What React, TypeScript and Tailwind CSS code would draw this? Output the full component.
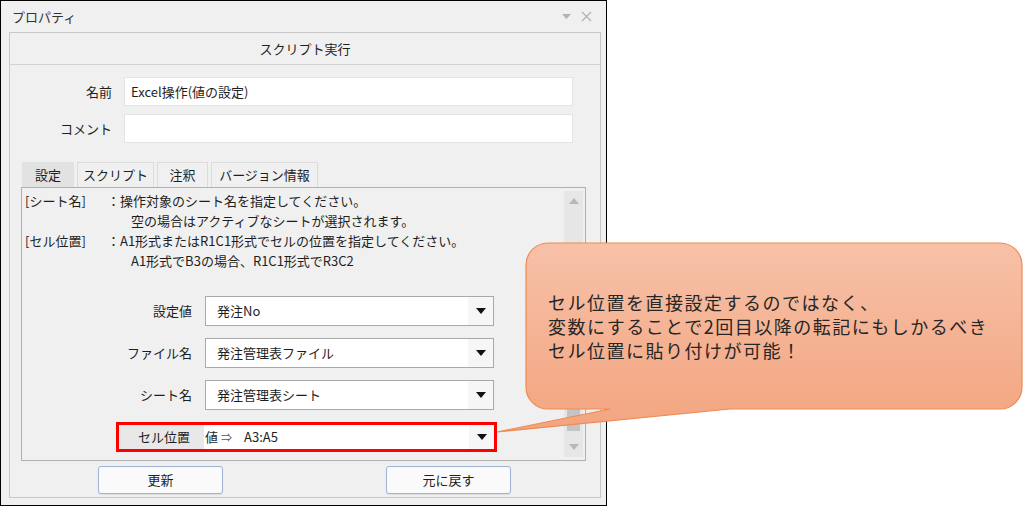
import React from "react";

const FONT = "font-['Noto_Sans_CJK_JP','Noto_Sans',sans-serif]";

const TABS = ["設定", "スクリプト", "注釈", "バージョン情報"];
const TAB_WIDTHS = ["w-[52px]", "w-[77px]", "w-[51px]", "w-[107px]"];

const FIELDS = [
  { label: "設定値", value: "発注No" },
  { label: "ファイル名", value: "発注管理表ファイル" },
  { label: "シート名", value: "発注管理表シート" },
];

function Caret() {
  return (
    <svg width="10" height="6" viewBox="0 0 10 6">
      <polygon points="0,0 10,0 5,6" fill="#111" />
    </svg>
  );
}

function Select({ value }: { value: string }) {
  return (
    <div className="flex h-[30px] w-[289px] border border-[#a9a9a9] bg-white">
      <div className="flex flex-1 items-center pl-[11px]">{value}</div>
      <div className="flex w-[25px] items-center justify-center bg-[#f6f6f6]">
        <Caret />
      </div>
    </div>
  );
}

function Button({ label }: { label: string }) {
  return (
    <div className="flex h-[28px] w-[125px] items-center justify-center rounded-[3px] border border-[#9fb4d2] bg-[#fafafa] shadow-[0_1px_1px_rgba(0,0,0,0.08)]">
      {label}
    </div>
  );
}

function Scrollbar() {
  return (
    <div className="my-[3px] mr-[2px] flex w-[19px] flex-col bg-[#e6e6e6]">
      <div className="flex h-[20px] items-center justify-center">
        <svg width="10" height="6" viewBox="0 0 10 6">
          <polygon points="0,6 10,6 5,0" fill="#b8b8b8" />
        </svg>
      </div>
      <div className="flex-1" />
      <div className="mx-[3px] h-[22px] bg-[#c4c4c4]" />
      <div className="h-[6px]" />
      <div className="flex h-[20px] items-center justify-center">
        <svg width="10" height="6" viewBox="0 0 10 6">
          <polygon points="0,0 10,0 5,6" fill="#b8b8b8" />
        </svg>
      </div>
    </div>
  );
}

function Callout() {
  return (
    <>
      <svg
        className="absolute left-[497px] top-[242px]"
        width="528"
        height="192"
        viewBox="0 0 528 192"
      >
        <defs>
          <linearGradient id="bubble" x1="0" y1="0" x2="0" y2="1">
            <stop offset="0" stopColor="#f7c1a8" />
            <stop offset="1" stopColor="#f3a47f" />
          </linearGradient>
        </defs>
        <path
          d="M51,1 H503 A22,22 0 0 1 525,23 V145 A22,22 0 0 1 503,167 H233 L0,190 L113,167 H51 A22,22 0 0 1 29,145 V23 A22,22 0 0 1 51,1 Z"
          fill="url(#bubble)"
          stroke="#ee8b52"
          strokeWidth="1.2"
        />
      </svg>
      <div className="absolute left-[548px] top-[290px] text-[18px] leading-[24px] tracking-[1.5px] text-[#262626]">
        <div>セル位置を直接設定するのではなく、</div>
        <div>変数にすることで2回目以降の転記にもしかるべき</div>
        <div>セル位置に貼り付けが可能！</div>
      </div>
    </>
  );
}

export default function App() {
  return (
    <div className={`relative h-[510px] w-[1024px] bg-white text-[13px] text-[#1e1e1e] ${FONT}`}>
      <div className="flex h-[506px] w-[607px] flex-col border border-black bg-[#f0f0f0]">
        {/* title bar */}
        <div className="flex h-[31px] items-center justify-between pl-[11px] pr-[14px]">
          <span className="text-[#333]">プロパティ</span>
          <div className="flex items-center gap-[10px]">
            <svg width="9" height="5" viewBox="0 0 9 5">
              <polygon points="0,0 9,0 4.5,5" fill="#b3b3b3" />
            </svg>
            <svg width="11" height="11" viewBox="0 0 11 11">
              <path d="M1 1 L10 10 M10 1 L1 10" stroke="#b3b3b3" strokeWidth="1.3" />
            </svg>
          </div>
        </div>

        <div className="ml-[8px] flex h-[466px] w-[592px] flex-col border border-[#c8c8c8]">
          <div className="flex h-[32px] items-center justify-center border-b border-[#d2d2d2]">
            スクリプト実行
          </div>

          <div className="mt-[12px] flex flex-col gap-[8px]">
            <div className="flex items-center">
              <div className="w-[102px] text-right">名前</div>
              <div className="ml-[12px] flex h-[29px] w-[449px] items-center border border-[#e4e4e4] bg-white pl-[6px]">
                Excel操作(値の設定)
              </div>
            </div>
            <div className="flex items-center">
              <div className="w-[102px] text-right">コメント</div>
              <div className="ml-[12px] h-[29px] w-[449px] border border-[#e4e4e4] bg-white" />
            </div>
          </div>

          {/* tabs */}
          <div className="ml-[12px] mt-[19px] flex gap-[3px]">
            {TABS.map((t, i) => (
              <div
                key={t}
                className={`flex h-[25px] items-center justify-center border border-b-0 ${TAB_WIDTHS[i]} ${
                  i === 0 ? "border-[#e2e2e2] bg-[#e2e2e2]" : "border-[#dcdcdc] bg-[#f0f0f0]"
                }`}
              >
                {t}
              </div>
            ))}
          </div>

          {/* tab content */}
          <div className="ml-[11px] flex h-[274px] w-[565px] border border-[#b0b0b0]">
            <div className="flex flex-1 flex-col pl-[3px] pt-[3px]">
              <div className="leading-[20px]">
                <div className="flex">
                  <span className="w-[82px]">[シート名]</span>
                  <span>：操作対象のシート名を指定してください。</span>
                </div>
                <div className="pl-[106px]">空の場合はアクティブなシートが選択されます。</div>
                <div className="flex">
                  <span className="w-[82px]">[セル位置]</span>
                  <span>：A1形式またはR1C1形式でセルの位置を指定してください。</span>
                </div>
                <div className="pl-[106px]">A1形式でB3の場合、R1C1形式でR3C2</div>
              </div>

              <div className="mt-[25px] flex flex-col gap-[12px] -ml-[3px]">
                {FIELDS.map((f) => (
                  <div key={f.label} className="flex items-center">
                    <div className="w-[170px] text-right">{f.label}</div>
                    <div className="ml-[13px]">
                      <Select value={f.value} />
                    </div>
                  </div>
                ))}
                <div className="flex">
                  <div className="w-[94px]" />
                  <div className="flex h-[30px] w-[381px] border-[3px] border-[#ff0000]">
                    <div className="flex w-[85px] items-center justify-end bg-[#e8e8e8] pr-[14px]">
                      セル位置
                    </div>
                    <div className="flex flex-1 items-center bg-white">
                      <span className="pl-[1px]">値</span>
                      <span className="ml-[3px] text-[11px] text-[#555]">⇒</span>
                      <span className="ml-[12px]">A3:A5</span>
                      <div className="flex-1" />
                      <div className="flex h-full w-[25px] items-center justify-center bg-[#f6f6f6]">
                        <Caret />
                      </div>
                    </div>
                  </div>
                </div>
              </div>
            </div>
            <Scrollbar />
          </div>

          {/* buttons */}
          <div className="mt-[5px] flex">
            <div className="ml-[88px]">
              <Button label="更新" />
            </div>
            <div className="ml-[163px]">
              <Button label="元に戻す" />
            </div>
          </div>
        </div>
      </div>

      <Callout />
    </div>
  );
}
